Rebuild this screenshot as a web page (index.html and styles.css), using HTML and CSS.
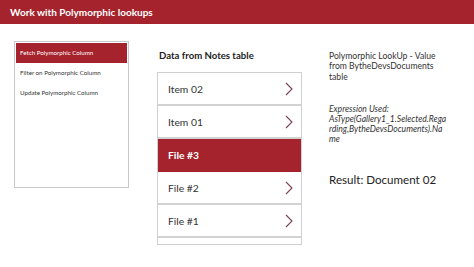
FILE: index.html
```html
<!DOCTYPE html>
<html>
<head>
<meta charset="utf-8">
<link rel="stylesheet" href="styles.css">
</head>
<body>
<header class="topbar">Work with Polymorphic lookups</header>
<main class="content">
  <nav class="menu">
    <div class="menu-item selected">Fetch Polymorphic Column</div>
    <div class="menu-item">Filter on Polymorphic Column</div>
    <div class="menu-item">Update Polymorphic Column</div>
  </nav>
  <section class="middle">
    <h2 class="mid-title">Data from Notes table</h2>
    <div class="gallery">
      <div class="row"><span>Item 02</span><svg class="chev" viewBox="0 0 8 14"><path d="M1 1 L7 7 L1 13"/></svg></div>
      <div class="row"><span>Item 01</span><svg class="chev" viewBox="0 0 8 14"><path d="M1 1 L7 7 L1 13"/></svg></div>
      <div class="row selected"><span>File #3</span></div>
      <div class="row"><span>File #2</span><svg class="chev" viewBox="0 0 8 14"><path d="M1 1 L7 7 L1 13"/></svg></div>
      <div class="row"><span>File #1</span><svg class="chev" viewBox="0 0 8 14"><path d="M1 1 L7 7 L1 13"/></svg></div>
      <div class="row"></div>
    </div>
  </section>
  <section class="right">
    <p class="desc">Polymorphic LookUp - Value from BytheDevsDocuments table</p>
    <p class="expr">Expression Used: AsType(Gallery1_1.Selected.Regarding,BytheDevsDocuments).Name</p>
    <p class="result">Result: Document 02</p>
  </section>
</main>
</body>
</html>
```
FILE: styles.css
```css
* { box-sizing: border-box; }
html, body { margin: 0; padding: 0; background: #fff; }
body {
  width: 474px;
  height: 267px;
  overflow: hidden;
  font-family: Lato, "Open Sans", sans-serif;
  color: #333;
}
.topbar {
  height: 24px;
  background: #a4232c;
  color: #fff;
  font-weight: 700;
  font-size: 10px;
  line-height: 24px;
  padding-left: 10px;
}
.content {
  display: flex;
  align-items: flex-start;
  padding-left: 14px;
}
.menu {
  margin-top: 17px;
  width: 115px;
  height: 147px;
  border: 1px solid #c8c8c8;
  padding: 1px;
}
.menu-item {
  height: 20px;
  line-height: 20px;
  font-size: 6.2px;
  padding-left: 4px;
  color: #333;
}
.menu-item.selected {
  background: #a4232c;
  color: #fff;
}
.middle {
  margin-left: 28px;
  width: 145px;
}
.mid-title {
  margin: 26px 0 0 2px;
  font-size: 9.6px;
  font-weight: 700;
  line-height: 12px;
  color: #222;
}
.gallery {
  margin-top: 10px;
  height: 173px;
  overflow: hidden;
  border: 1px solid #d0d0d0;
}
.row {
  height: 33px;
  border-bottom: 2px solid #d2d2d2;
  display: flex;
  align-items: center;
  justify-content: space-between;
  padding: 0 8px 0 10px;
  font-size: 10.3px;
  color: #333;
}
.row.selected {
  background: #a4232c;
  color: #fff;
  font-weight: 700;
  border-bottom-color: #a4232c;
}
.chev {
  width: 8px;
  height: 14px;
  fill: none;
  stroke: #7d4050;
  stroke-width: 1.1;
}
.right {
  margin-left: 27px;
  width: 119px;
  font-size: 8.6px;
  line-height: 10.3px;
  color: #333;
}
.desc { margin: 27px 0 0 0; }
.expr {
  margin: 22px 0 0 0;
  font-style: italic;
  line-height: 10px;
  overflow-wrap: anywhere;
}
.result {
  margin: 29px 0 0 0;
  font-size: 11.6px;
  line-height: 14px;
  font-weight: 400;
  color: #222;
}
```
